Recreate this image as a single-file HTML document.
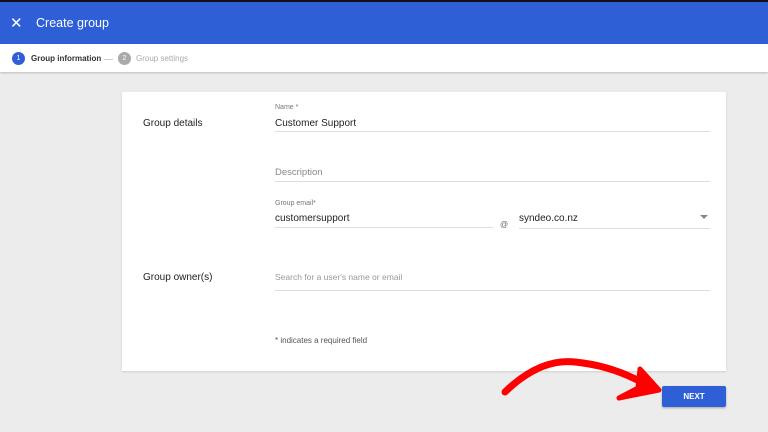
<!DOCTYPE html>
<html><head><style>
*{margin:0;padding:0;box-sizing:border-box}
body{width:768px;height:432px;background:#ececec;font-family:"Liberation Sans",sans-serif;position:relative;overflow:hidden}
.abs{position:absolute}
.top{left:0;top:0;width:768px;height:44px;background:#2e5fd6;border-top:2px solid #111}
.steps{left:0;top:44px;width:768px;height:28px;background:#fff;box-shadow:0 1px 2px rgba(0,0,0,.2)}
.card{left:122px;top:92px;width:604px;height:279px;background:#fff;box-shadow:0 1px 2px rgba(0,0,0,.12)}
.lbl{font-size:10px;color:#222}
.small{font-size:7px;color:#777}
.line{height:1px;background:#ddd}
</style></head><body>
<div class="abs top"></div>
<div class="abs" style="left:10px;top:14px;color:#fff;font-size:15px">✕</div>
<div class="abs" style="left:36px;top:16px;color:#fff;font-size:12.5px">Create group</div>
<div class="abs steps"></div>
<div class="abs" style="left:12px;top:52px;width:13px;height:13px;border-radius:50%;background:#2e5fd6;color:#fff;font-size:7px;text-align:center;line-height:13px">1</div>
<div class="abs" style="left:31px;top:54px;font-size:8px;font-weight:bold;color:#333">Group information</div>
<div class="abs" style="left:104px;top:59px;width:9px;height:1px;background:#ccc"></div>
<div class="abs" style="left:118px;top:52px;width:13px;height:13px;border-radius:50%;background:#aaa;color:#fff;font-size:7px;text-align:center;line-height:13px">2</div>
<div class="abs" style="left:136px;top:54px;font-size:8px;color:#aaa">Group settings</div>
<div class="abs card"></div>
<div class="abs lbl" style="left:143px;top:118px">Group details</div>
<div class="abs small" style="left:275px;top:104px">Name *</div>
<div class="abs lbl" style="left:275px;top:118px">Customer Support</div>
<div class="abs line" style="left:275px;top:131px;width:435px"></div>
<div class="abs" style="left:275px;top:167px;font-size:9.5px;color:#888">Description</div>
<div class="abs line" style="left:275px;top:181px;width:435px"></div>
<div class="abs small" style="left:275px;top:200px">Group email*</div>
<div class="abs lbl" style="left:275px;top:213px">customersupport</div>
<div class="abs line" style="left:275px;top:227px;width:218px"></div>
<div class="abs" style="left:500px;top:220px;font-size:8px;color:#666">@</div>
<div class="abs lbl" style="left:519px;top:213px">syndeo.co.nz</div>
<div class="abs" style="left:700px;top:215px;width:0;height:0;border-left:4px solid transparent;border-right:4px solid transparent;border-top:4px solid #888"></div>
<div class="abs line" style="left:519px;top:228px;width:191px"></div>
<div class="abs lbl" style="left:143px;top:272px">Group owner(s)</div>
<div class="abs" style="left:275px;top:272px;font-size:8.5px;color:#999">Search for a user's name or email</div>
<div class="abs line" style="left:275px;top:290px;width:435px"></div>
<div class="abs" style="left:275px;top:336px;font-size:8px;color:#555">* indicates a required field</div>
<div class="abs" style="left:662px;top:386px;width:64px;height:21px;background:#2e5fd6;border-radius:2px;color:#fff;font-size:8px;font-weight:bold;text-align:center;line-height:21px;box-shadow:0 1px 2px rgba(0,0,0,.3)">NEXT</div>
<svg class="abs" style="left:0;top:0" width="768" height="432">
<path d="M505 392 Q540 358 575 362 Q615 366 648 386" stroke="#f00" stroke-width="7" fill="none" stroke-linecap="round"/>
<path d="M640 369 L659 390 L619 398 L638 388 Z" fill="#f00" stroke="#f00" stroke-width="5" stroke-linejoin="round"/>
</svg>
</body></html>
